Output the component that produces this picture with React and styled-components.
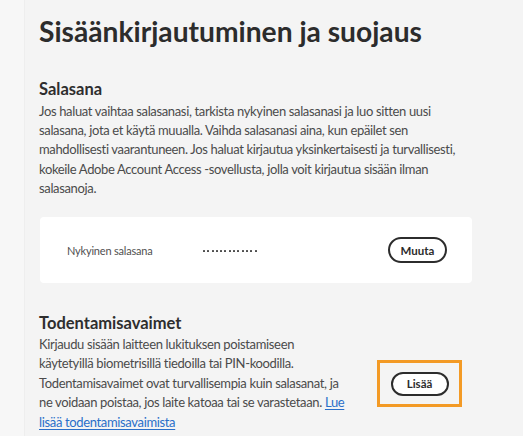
import React from "react";
import styled, { createGlobalStyle } from "styled-components";

const Global = createGlobalStyle`
  html, body { margin: 0; padding: 0; background: #f4f4f4; }
  body { font-family: "Lato", "Noto Sans", sans-serif; color: #2c2c2c; }
  * { box-sizing: border-box; }
`;

const Page = styled.div`
  display: flex;
  width: 523px;
  height: 436px;
  overflow: hidden;
  background: #f4f4f4;
`;

const Rail = styled.div`
  flex: 0 0 25px;
  background: #f7f7f7;
  border-right: 1px solid #eeeeee;
`;

const Main = styled.main`
  flex: 1;
  padding: 13px 0 0 14px;
  display: flex;
  flex-direction: column;
`;

const Title = styled.h1`
  margin: 0;
  font-size: 28.2px;
  line-height: 36px;
  font-weight: 700;
  color: #2c2c2c;
  white-space: nowrap;
`;

const Section = styled.section`
  margin-top: ${(p) => p.$top}px;
  display: flex;
  flex-direction: column;
`;

const Heading = styled.h2`
  margin: 0;
  font-size: 16.5px;
  line-height: 22px;
  font-weight: 700;
  color: #2e2e2e;
`;

const Text = styled.p`
  margin: ${(p) => p.$top}px 0 0;
  width: ${(p) => p.$w}px;
  font-size: 13px;
  letter-spacing: -0.35px;
  line-height: ${(p) => p.$lh}px;
  color: #4b4b4b;
  white-space: nowrap;
`;

const Card = styled.div`
  margin-top: 19px;
  margin-left: 1px;
  width: 432px;
  height: 66px;
  background: #fff;
  border-radius: 4px;
  display: flex;
  align-items: center;
  padding: 0 25px 0 27px;
`;

const Label = styled.span`
  width: 136px;
  font-size: 11px;
  letter-spacing: -0.2px;
  color: #505050;
`;

const Dots = styled.span`
  flex: 1;
  display: flex;
  gap: 2.3px;
  padding-top: 1px;
`;

const Dot = styled.i`
  width: 2px;
  height: 2px;
  background: #4a4a4a;
  border-radius: 0.5px;
`;

const Pill = styled.button`
  width: ${(p) => p.$w}px;
  height: ${(p) => p.$h}px;
  padding: 0;
  border: 2px solid #2c2c2c;
  border-radius: 13px;
  background: #fff;
  font-family: inherit;
  font-size: 11.5px;
  font-weight: 700;
  color: #2c2c2c;
  display: flex;
  align-items: center;
  justify-content: center;
`;

const Row = styled.div`
  display: flex;
  align-items: center;
`;

const Focus = styled.div`
  margin-left: 28px;
  margin-top: 1px;
  width: 85px;
  height: 47px;
  border: 3px solid #f39a25;
  display: flex;
  align-items: center;
  justify-content: center;
`;

const Link = styled.a`
  color: #2a6fc9;
  text-decoration: underline;
  text-underline-offset: 2px;
`;

export default function App() {
  return (
    <>
      <Global />
      <Page>
        <Rail />
        <Main>
          <Title>Sisäänkirjautuminen ja suojaus</Title>
          <Section $top={29}>
            <Heading>Salasana</Heading>
            <Text $w={433} $lh={19.2} $top={2}>
              Jos haluat vaihtaa salasanasi, tarkista nykyinen salasanasi ja luo sitten uusi
              <br />
              salasana, jota et käytä muualla. Vaihda salasanasi aina, kun epäilet sen
              <br />
              mahdollisesti vaarantuneen. Jos haluat kirjautua yksinkertaisesti ja turvallisesti,
              <br />
              kokeile Adobe Account Access -sovellusta, jolla voit kirjautua sisään ilman
              <br />
              salasanoja.
            </Text>
            <Card>
              <Label>Nykyinen salasana</Label>
              <Dots aria-label="salasana">
                {Array.from({ length: 13 }, (_, i) => (
                  <Dot key={i} />
                ))}
              </Dots>
              <Pill $w={59} $h={26}>Muuta</Pill>
            </Card>
          </Section>
          <Section $top={29}>
            <Heading>Todentamisavaimet</Heading>
            <Row>
              <Text $w={310} $lh={19.5} $top={0.6}>
                Kirjaudu sisään laitteen lukituksen poistamiseen
                <br />
                käytetyillä biometrisillä tiedoilla tai PIN-koodilla.
                <br />
                Todentamisavaimet ovat turvallisempia kuin salasanat, ja
                <br />
                ne voidaan poistaa, jos laite katoaa tai se varastetaan.{" "}
                <Link href="#">
                  Lue
                  <br />
                  lisää todentamisavaimista
                </Link>
              </Text>
              <Focus>
                <Pill $w={58} $h={24}>Lisää</Pill>
              </Focus>
            </Row>
          </Section>
        </Main>
      </Page>
    </>
  );
}
